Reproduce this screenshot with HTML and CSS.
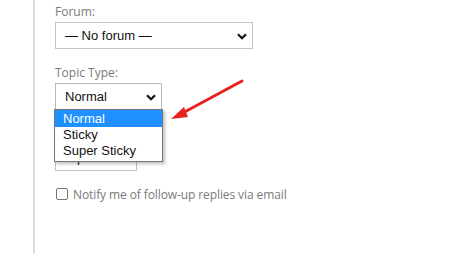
FILE: index.html
```html
<!DOCTYPE html>
<html lang="en">
  <head>
    <meta charset="UTF-8" />
    <title>New Topic</title>
    <link rel="stylesheet" href="styles.css">
  </head>
  <body>
    <div class="page">
      <div class="form-area">
        <div class="field">
          <label class="field-label">Forum:</label>
          <div class="select select-wide">
            <span>— No forum —</span>
            <svg class="chev" width="10" height="7" viewBox="0 0 10 7"><path d="M1 1.2 L5 5.2 L9 1.2" fill="none" stroke="#111" stroke-width="2.2"/></svg>
          </div>
        </div>

        <div class="field">
          <label class="field-label">Topic Type:</label>
          <div class="select select-type">
            <span>Normal</span>
            <svg class="chev" width="10" height="7" viewBox="0 0 10 7"><path d="M1 1.2 L5 5.2 L9 1.2" fill="none" stroke="#111" stroke-width="2.2"/></svg>
            <!-- open list of the select above -->
            <ul class="options">
              <li class="active">Normal</li>
              <li>Sticky</li>
              <li>Super Sticky</li>
            </ul>
          </div>
        </div>

        <div class="field field-under">
          <div class="select select-status">
            <span>Open</span>
          </div>
        </div>

        <div class="notify">
          <span class="checkbox"></span>
          <span>Notify me of follow-up replies via email</span>
        </div>
      </div>
    </div>

    <svg class="arrow" width="90" height="50" viewBox="0 0 90 50">
      <path d="M72 3 L9 37" stroke="#e8221f" stroke-width="3" stroke-linecap="round" fill="none"/>
      <path d="M1 41 L14 29 L18 39 Z" fill="#e8221f"/>
    </svg>
  </body>
</html>
```

FILE: styles.css
```css
body {
  margin: 0;
  padding: 0;
  background: #fff;
  font-family: "Open Sans", sans-serif;
  width: 474px;
  height: 254px;
  overflow: hidden;
  position: relative;
}
.page {
  margin-left: 33px;
  border-left: 2px solid #dcdcdc;
  height: 254px;
}
.form-area {
  padding-left: 20px;
  padding-top: 4px;
}
.field {
  margin-bottom: 16px;
}
.field-under {
  padding-top: 18px;
}
.field-label {
  display: block;
  font-size: 12px;
  line-height: 16px;
  color: #7a7a7a;
  margin-bottom: 2px;
}
.select {
  position: relative;
  box-sizing: border-box;
  height: 27px;
  border: 1px solid #c4c4c4;
  background: #fff;
  font-family: "Liberation Sans", Arial, sans-serif;
  font-size: 13px;
  color: #111;
  display: flex;
  align-items: center;
  padding-left: 9px;
}
.select-wide {
  width: 198px;
}
.select-type {
  width: 107px;
  border-color: #b8b8b8;
}
.select-status {
  width: 82px;
  padding-left: 11px;
}
.chev {
  position: absolute;
  right: 5px;
  top: 10px;
}
.options {
  position: absolute;
  left: -2px;
  top: 25px;
  width: 107px;
  margin: 0;
  padding: 0 0 2px 0;
  list-style: none;
  background: #fff;
  border: 1px solid #777;
  box-shadow: 2px 2px 3px rgba(0, 0, 0, 0.25);
  z-index: 2;
}
.options li {
  font-size: 13px;
  line-height: 16px;
  padding-left: 8px;
  color: #111;
}
.options li.active {
  background: #1e90ff;
  color: #fff;
  line-height: 17px;
}
.notify {
  display: flex;
  align-items: flex-start;
  gap: 5px;
  margin-top: 0;
  line-height: 16px;
  font-size: 12px;
  letter-spacing: -0.1px;
  color: #7a7a7a;
}
.checkbox {
  width: 12px;
  height: 12px;
  border: 1px solid #777;
  border-radius: 2px;
  box-sizing: border-box;
  margin-left: 1px;
  margin-top: 1px;
}
.arrow {
  position: absolute;
  left: 170px;
  top: 78px;
}
```
